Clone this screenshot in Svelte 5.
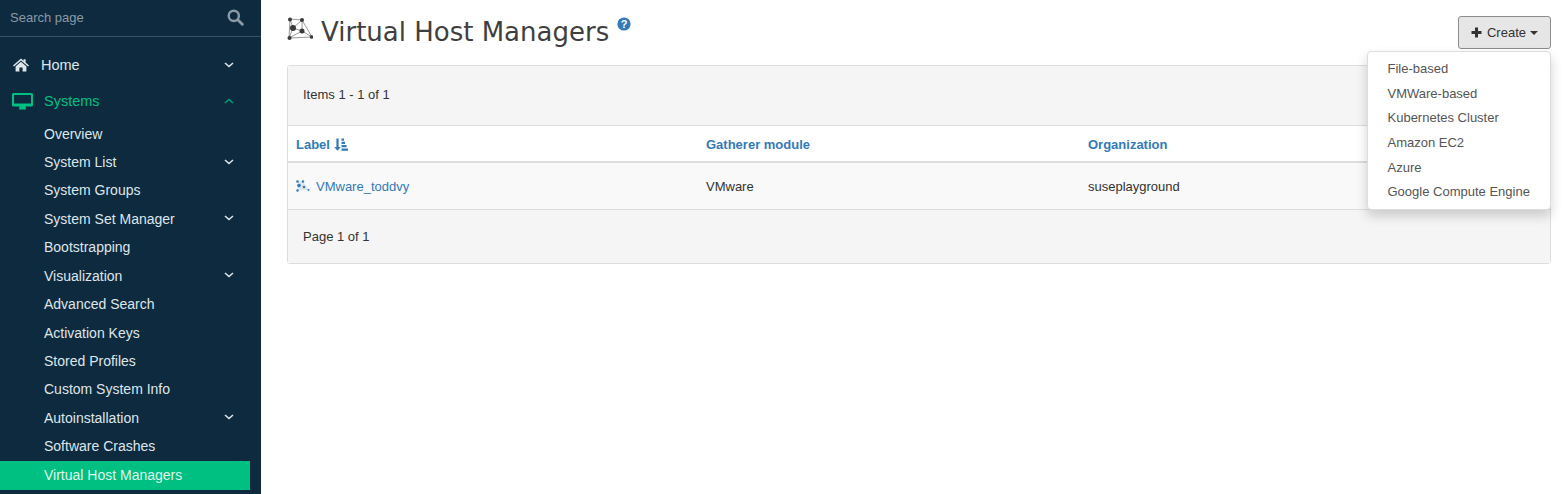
<script>
	const menu = [
		{ label: 'Overview' },
		{ label: 'System List', more: true },
		{ label: 'System Groups' },
		{ label: 'System Set Manager', more: true },
		{ label: 'Bootstrapping' },
		{ label: 'Visualization', more: true },
		{ label: 'Advanced Search' },
		{ label: 'Activation Keys' },
		{ label: 'Stored Profiles' },
		{ label: 'Custom System Info' },
		{ label: 'Autoinstallation', more: true },
		{ label: 'Software Crashes' },
		{ label: 'Virtual Host Managers', active: true }
	];

	const createOptions = [
		'File-based',
		'VMWare-based',
		'Kubernetes Cluster',
		'Amazon EC2',
		'Azure',
		'Google Compute Engine'
	];
</script>

{#snippet chevron(up)}
	<svg class="chevron" viewBox="0 0 10 6" width="10" height="6">
		<path d={up ? 'M1 5 L5 1.5 L9 5' : 'M1 1 L5 4.5 L9 1'} fill="none" stroke="currentColor" stroke-width="1.6" />
	</svg>
{/snippet}

{#snippet network(size)}
	<svg viewBox="0 0 26 24" width={size} height={size * 24 / 26}>
		<g fill="none" stroke="#555" stroke-width="0.6">
			<path d="M3 2 L15 3 L25 20 L2 21 Z" />
			<path d="M3 2 L6 11 L2 21 M6 11 L15 3 L15 14 L25 20 M6 11 L15 14 L2 21" />
		</g>
		<g fill="#3a3a3a">
			<circle cx="3" cy="2.5" r="2" />
			<circle cx="15" cy="3" r="2" />
			<circle cx="6" cy="11" r="3" />
			<circle cx="15" cy="14" r="2.5" />
			<circle cx="2.5" cy="21" r="2" />
			<circle cx="24.5" cy="20" r="1.8" />
		</g>
	</svg>
{/snippet}

<div class="layout">
	<aside class="sidebar">
		<div class="search">
			<span>Search page</span>
			<svg viewBox="0 0 18 18" width="17" height="17">
				<circle cx="7.2" cy="7.2" r="5.4" fill="none" stroke="currentColor" stroke-width="2.6" />
				<path d="M11.4 11.4 L16.2 16.2" stroke="currentColor" stroke-width="3" stroke-linecap="round" />
			</svg>
		</div>
		<nav>
			<div class="top">
				<svg class="home" viewBox="0 0 16 14" width="16" height="14">
					<path fill="currentColor" d="M8 0.4 L10.6 2.7 V1.2 H12.6 V4.5 L16 7.5 L15 8.6 L8 2.5 L1 8.6 L0 7.5 Z M2.6 8.4 L8 3.7 L13.4 8.4 V13.6 H9.6 V9.6 H6.4 V13.6 H2.6 Z" />
				</svg>
				<span class="grow">Home</span>
				{@render chevron(false)}
			</div>
			<div class="top open">
				<svg class="monitor" viewBox="0 0 21 17" width="21" height="17">
					<path fill="currentColor" fill-rule="evenodd" d="M1.5 0 H19.5 A1.5 1.5 0 0 1 21 1.5 V12 A1.5 1.5 0 0 1 19.5 13.5 H1.5 A1.5 1.5 0 0 1 0 12 V1.5 A1.5 1.5 0 0 1 1.5 0 Z M2 2 V10.5 H19 V2 Z M7.5 13.5 H13.5 L14 16.5 H7 Z" />
				</svg>
				<span class="grow">Systems</span>
				{@render chevron(true)}
			</div>
			<ul>
				{#each menu as item}
					<li class:active={item.active}>
						<span class="grow">{item.label}</span>
						{#if item.more}
							{@render chevron(false)}
						{/if}
					</li>
				{/each}
			</ul>
		</nav>
	</aside>

	<main>
		<header>
			<div class="title">
				{@render network(26)}
				<h1>Virtual Host Managers</h1>
				<svg class="help" viewBox="0 0 14 14" width="14" height="14">
					<circle cx="7" cy="7" r="6.6" fill="#337ab7" />
					<text x="7" y="11" text-anchor="middle">?</text>
				</svg>
			</div>
			<div class="create">
				<button>
					<svg viewBox="0 0 11 11" width="11" height="11">
						<path fill="#333" d="M4 0.5 H7 V4 H10.5 V7 H7 V10.5 H4 V7 H0.5 V4 H4 Z" />
					</svg>
					Create
					<span class="caret"></span>
				</button>
				<div class="dropdown">
					{#each createOptions as option}
						<div class="option">{option}</div>
					{/each}
				</div>
			</div>
		</header>

		<section class="panel">
			<div class="panel-head">Items 1 - 1 of 1</div>
			<div class="row head">
				<div class="c1">
					Label
					<svg viewBox="0 0 14 13" width="14" height="13">
						<path fill="#337ab7" d="M2.4 0.5 H4.6 V9 H6.8 L3.5 12.8 L0.2 9 H2.4 Z M7.5 0.5 H10 V2.8 H7.5 Z M7.5 3.8 H11 V6 H7.5 Z M7.5 7 H12.5 V9.2 H7.5 Z M7.5 10.5 H14 V12.8 H7.5 Z" />
					</svg>
				</div>
				<div class="c2">Gatherer module</div>
				<div class="c3">Organization</div>
			</div>
			<div class="row body">
				<div class="c1">
					<svg viewBox="0 0 14 12" width="14" height="12">
						<path d="M1.5 1.5 L7 1.5 L12.5 10 L1.5 10.5 Z" fill="#337ab7" fill-opacity="0.15" />
						<g fill="#337ab7">
							<circle cx="1.5" cy="1.5" r="1.3" />
							<circle cx="7" cy="1.5" r="1.2" />
							<circle cx="3" cy="5.5" r="1.8" />
							<circle cx="8" cy="7" r="1.3" />
							<circle cx="1.5" cy="10.5" r="1.2" />
							<circle cx="12.5" cy="10" r="1" />
						</g>
					</svg>
					<a href="#vm">VMware_toddvy</a>
				</div>
				<div class="c2">VMware</div>
				<div class="c3">suseplayground</div>
			</div>
			<div class="panel-foot">Page 1 of 1</div>
		</section>
	</main>
</div>

<style>
	:global(body) {
		margin: 0;
		background: #fff;
		font-family: 'Liberation Sans', Arial, sans-serif;
		font-size: 13px;
		color: #333;
		overflow: hidden;
	}

	.layout {
		display: flex;
		height: 494px;
		overflow: hidden;
	}

	.sidebar {
		width: 261px;
		flex: none;
		background: #0d2a3f;
		color: #dfe6ea;
		font-size: 14px;
	}

	.search {
		height: 37px;
		padding: 0 17px 2px 10px;
		box-sizing: border-box;
		border-bottom: 1px solid #3a5364;
		display: flex;
		align-items: center;
		justify-content: space-between;
		font-size: 13px;
		color: #8b9aa5;
	}

	nav {
		padding-top: 10px;
	}

	.top {
		height: 36px;
		display: flex;
		align-items: center;
		padding: 0 27px 0 13px;
		font-size: 14.5px;
	}

	.top .grow {
		margin-left: 12px;
	}

	.top.open {
		color: #00c081;
		padding-left: 12px;
	}

	.top.open .grow {
		margin-left: 11px;
	}

	.top.open .chevron {
		color: #00a076;
	}

	.home {
		margin-top: -1px;
	}

	.grow {
		flex: 1;
	}

	ul {
		list-style: none;
		margin: 0;
		padding: 0.4px 0 0;
	}

	li {
		height: 28.43px;
		display: flex;
		align-items: center;
		padding: 0 16px 0 44px;
		margin-right: 11px;
	}

	li.active {
		height: 29px;
		margin-top: 0.4px;
		background: #00c081;
		color: #dff5ea;
	}

	.chevron {
		margin-top: -1px;
	}

	main {
		flex: 1;
		min-width: 0;
		padding: 0 16px 0 26px;
	}

	header {
		height: 65px;
		display: flex;
		justify-content: space-between;
		align-items: flex-start;
	}

	.title {
		display: flex;
		align-items: flex-start;
		padding-top: 17px;
	}

	h1 {
		margin: 0 8px 0 8px;
		font-family: 'DejaVu Sans', sans-serif;
		font-weight: 400;
		font-size: 26px;
		line-height: 30px;
		color: #3f3f3f;
	}

	.help text {
		font-family: 'Liberation Sans', sans-serif;
		font-size: 11px;
		font-weight: 700;
		fill: #fff;
	}

	.create {
		position: relative;
		padding-top: 16px;
	}

	button {
		height: 33px;
		width: 93px;
		box-sizing: border-box;
		background: #e6e6e6;
		border: 1px solid #8c8c8c;
		border-radius: 3px;
		font: inherit;
		color: #333;
		display: flex;
		align-items: center;
		justify-content: center;
		gap: 5px;
		padding: 0;
	}

	.caret {
		width: 0;
		height: 0;
		margin-left: -1px;
		border-top: 4px solid #333;
		border-left: 4px solid transparent;
		border-right: 4px solid transparent;
	}

	.dropdown {
		position: absolute;
		top: 51px;
		right: 0;
		width: 184px;
		height: 159px;
		box-sizing: border-box;
		padding: 5px 0;
		background: #fff;
		border: 1px solid #ddd;
		border-radius: 4px;
		box-shadow: 0 6px 12px rgba(0, 0, 0, 0.175);
		z-index: 2;
	}

	.option {
		height: 24.67px;
		line-height: 24.67px;
		padding-left: 19.5px;
		color: #555;
	}

	.panel {
		border: 1px solid #ddd;
		border-radius: 3px;
		height: 199px;
		box-sizing: border-box;
	}

	.panel-head {
		height: 60px;
		display: flex;
		align-items: center;
		padding: 0 0 2px 15px;
		box-sizing: border-box;
		background: #f5f5f5;
		border-bottom: 1px solid #ddd;
	}

	.row {
		display: flex;
		align-items: center;
		padding-left: 8px;
	}

	.row.head {
		height: 37px;
		padding-top: 1px;
		box-sizing: border-box;
		border-bottom: 2px solid #ddd;
		font-weight: 700;
		color: #337ab7;
	}

	.row.body {
		height: 47px;
		box-sizing: border-box;
		background: #f9f9f9;
		border-bottom: 1px solid #ddd;
	}

	.c1 {
		width: 410px;
		display: flex;
		align-items: center;
		gap: 4px;
	}

	.row.body .c1 {
		gap: 6px;
	}

	.c2 {
		width: 382px;
	}

	a {
		color: #337ab7;
		text-decoration: none;
	}

	.panel-foot {
		height: 53px;
		display: flex;
		align-items: center;
		padding-left: 15px;
		background: #f5f5f5;
	}
</style>
